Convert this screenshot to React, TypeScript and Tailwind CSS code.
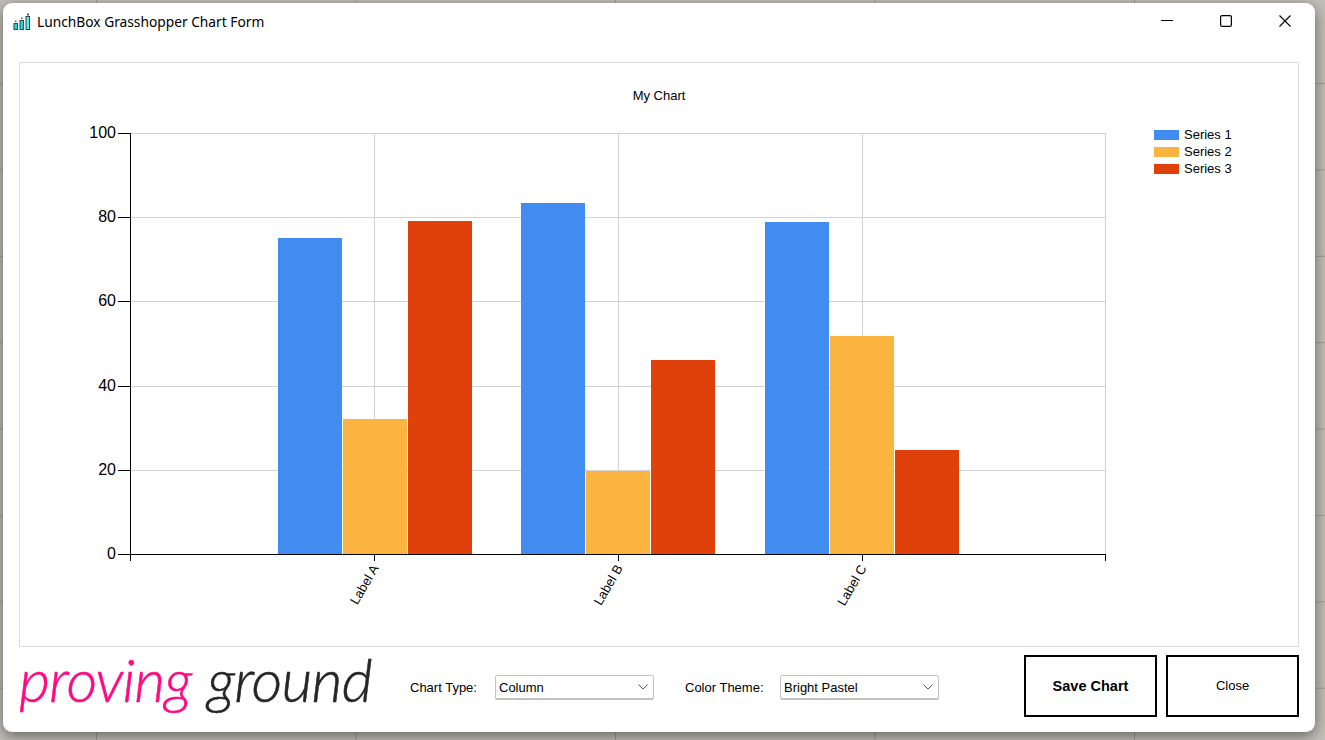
import React from "react";

const yTicks = [
  { v: "100", y: 133 },
  { v: "80", y: 217 },
  { v: "60", y: 301 },
  { v: "40", y: 386 },
  { v: "20", y: 470 },
  { v: "0", y: 554 },
];
const colors = ["#418cf0", "#fcb441", "#e0400a"];
const groups = [
  { label: "Label A", x: 374, starts: [278, 343, 408], tops: [238, 419, 221] },
  { label: "Label B", x: 618, starts: [521, 586, 651], tops: [203, 471, 360] },
  { label: "Label C", x: 862, starts: [765, 830, 895], tops: [222, 336, 450] },
];
const legend = [
  { name: "Series 1", y: 130 },
  { name: "Series 2", y: 147 },
  { name: "Series 3", y: 164 },
];

function Chart() {
  return (
    <svg width="1278" height="583" viewBox="20 63 1278 583" className="block" shapeRendering="crispEdges">
      <text x="659" y="100" textAnchor="middle" fontSize="13" fill="#000">My Chart</text>
      {yTicks.slice(0, 5).map((t) => (
        <rect key={t.y} x="131" y={t.y} width="975" height="1" fill="#d3d3d3" />
      ))}
      {groups.map((g) => (
        <rect key={g.x} x={g.x} y="133" width="1" height="421" fill="#d3d3d3" />
      ))}
      <rect x="1105" y="133" width="1" height="421" fill="#d3d3d3" />
      {groups.map((g) =>
        g.starts.map((s, i) => (
          <rect key={s} x={s} y={g.tops[i]} width="64" height={554 - g.tops[i]} fill={colors[i]} />
        ))
      )}
      <rect x="130" y="133" width="1" height="422" fill="#000" />
      <rect x="130" y="554" width="976" height="1" fill="#000" />
      {yTicks.map((t) => (
        <g key={t.y}>
          <rect x="118" y={t.y} width="12" height="1" fill="#000" />
          <text x="116" y={t.y + 5} textAnchor="end" fontSize="16" fill="#000">{t.v}</text>
        </g>
      ))}
      {[130, 374, 618, 862, 1105].map((x) => (
        <rect key={x} x={x} y="555" width="1" height="6" fill="#000" />
      ))}
      {groups.map((g) => (
        <text
          key={g.label}
          x={g.x + 5}
          y="568"
          textAnchor="end"
          fontSize="13"
          fill="#000"
          transform={`rotate(-60 ${g.x + 5} 568)`}
        >
          {g.label}
        </text>
      ))}
      {legend.map((l, i) => (
        <g key={l.name}>
          <rect x="1154" y={l.y} width="25" height="10" fill={colors[i]} />
          <text x="1184" y={l.y + 9} fontSize="13" fill="#000">{l.name}</text>
        </g>
      ))}
    </svg>
  );
}

function AppIcon() {
  return (
    <svg width="18" height="18" viewBox="0 0 18 18" className="shrink-0">
      <rect x="1" y="10.5" width="3.5" height="6" fill="#25d3e0" stroke="#2c4a52" strokeWidth="1" />
      <rect x="7" y="7.5" width="3.5" height="9" fill="#25d3e0" stroke="#2c4a52" strokeWidth="1" />
      <rect x="13" y="3.5" width="3.5" height="13" fill="#5ce9f0" stroke="#2c4a52" strokeWidth="1" />
      <rect x="2" y="7.5" width="1.5" height="1.5" fill="#555" />
      <rect x="8" y="4.5" width="1.5" height="1.5" fill="#555" />
      <rect x="14" y="0.5" width="2" height="2" fill="#555" />
    </svg>
  );
}

function Chevron() {
  return (
    <svg width="10" height="6" viewBox="0 0 10 6" className="shrink-0">
      <path d="M0.5 0.5 L5 5 L9.5 0.5" fill="none" stroke="#555" strokeWidth="1" />
    </svg>
  );
}

function Select({ value }: { value: string }) {
  return (
    <div className="w-[159px] h-[24px] flex items-center justify-between pl-[3px] pr-[5px] bg-[#fefefe] border border-[#c4c4c4] rounded-[2px] shadow-[0_1px_0_#c0c0c0] text-[13px] text-black">
      <span className="pt-[3px]">{value}</span>
      <Chevron />
    </div>
  );
}

export default function App() {
  return (
    <div className="w-[1325px] h-[740px] overflow-hidden pt-[3px] pl-[3px] font-['Liberation_Sans',Arial,sans-serif] bg-[#c4c1b9] bg-[linear-gradient(to_right,#a3a098_1px,transparent_1px),linear-gradient(to_bottom,#a3a098_1px,transparent_1px)] bg-[size:259.5px_86.4px] bg-[position:96px_83px]">
      <div className="w-[1312px] h-[729px] bg-white rounded-[9px] shadow-[0_4px_16px_rgba(0,0,0,0.5)] flex flex-col">
        <div className="h-[59px] shrink-0 flex items-start">
          <div className="flex items-center gap-[6px] pl-[10px] pt-[8px] h-[29px]">
            <AppIcon />
            <span className="font-['Noto_Sans',sans-serif] text-[13.75px] text-[#000] leading-none">LunchBox Grasshopper Chart Form</span>
          </div>
          <div className="ml-auto flex items-center h-[36px]">
            <div className="w-[59px] flex justify-center">
              <svg width="12" height="12" viewBox="0 0 12 12"><rect x="0" y="5" width="12" height="1" fill="#000" /></svg>
            </div>
            <div className="w-[59px] flex justify-center">
              <svg width="12" height="12" viewBox="0 0 12 12"><rect x="0.6" y="0.6" width="10.8" height="10.8" rx="1.5" fill="none" stroke="#000" strokeWidth="1.2" /></svg>
            </div>
            <div className="w-[59px] mr-[1px] flex justify-center">
              <svg width="12" height="12" viewBox="0 0 12 12"><path d="M0.5 0.5 L11.5 11.5 M11.5 0.5 L0.5 11.5" stroke="#000" strokeWidth="1.1" fill="none" /></svg>
            </div>
          </div>
        </div>
        <div className="mx-[16px] w-[1280px] h-[585px] border border-[#dcdcdc] bg-white">
          <Chart />
        </div>
        <div className="flex items-center px-[16px] pt-[8px] text-[13px] text-black">
          <div className="w-[391px] h-[62px] pb-[14px] flex items-center leading-none whitespace-nowrap font-['Lato',sans-serif] italic font-light text-[60px] tracking-[-0.85px] [-webkit-text-stroke:0.5px]">
            <span className="text-[#ff0a82]">proving</span>
            <span className="text-[#262626] ml-[16px]">ground</span>
          </div>
          <span className="w-[85px] pt-[4px]">Chart Type:</span>
          <div className="pt-[1px]"><Select value="Column" /></div>
          <span className="w-[95px] ml-[31px] pt-[4px]">Color Theme:</span>
          <div className="pt-[1px]"><Select value="Bright Pastel" /></div>
          <div className="ml-auto flex gap-[9px]">
            <button className="w-[133px] h-[62px] border-2 border-black font-bold text-[14.5px] bg-white pt-[2px]">Save Chart</button>
            <button className="w-[133px] h-[62px] border-2 border-black text-[13px] bg-white">Close</button>
          </div>
        </div>
      </div>
    </div>
  );
}
